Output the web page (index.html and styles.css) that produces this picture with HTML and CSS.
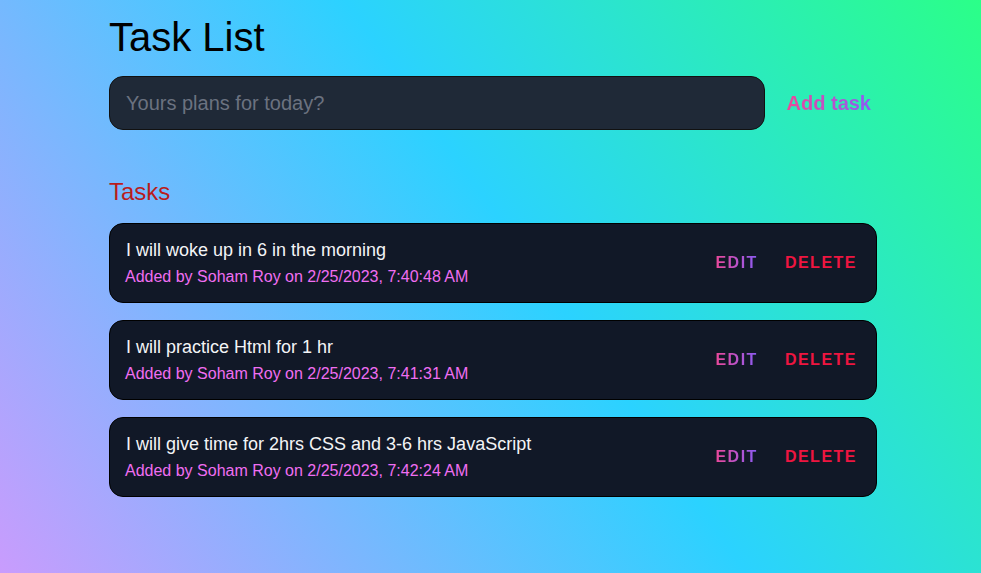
FILE: index.html
```html
<!DOCTYPE html>
<html lang="en">
<head>
	<meta charset="UTF-8">
	<title>Task List</title>
	<link rel="stylesheet" href="styles.css">
</head>
<body>

	<div class="wrapper">
		<h1>Task List</h1>
		<form class="new-task" action="" method="get">
			<input type="text" name="task" id="task" placeholder="Yours plans for today?">
			<button type="button" class="add"><span>Add task</span></button>
		</form>

		<h2>Tasks</h2>
		<div class="tasks">
			<div class="task">
				<div class="content">
					<div class="text">I will woke up in 6 in the morning</div>
					<div class="meta">Added by Soham Roy on 2/25/2023, 7:40:48 AM</div>
				</div>
				<div class="actions">
					<button class="edit"><span>Edit</span></button>
					<button class="delete">Delete</button>
				</div>
			</div>
			<div class="task">
				<div class="content">
					<div class="text">I will practice Html for 1 hr</div>
					<div class="meta">Added by Soham Roy on 2/25/2023, 7:41:31 AM</div>
				</div>
				<div class="actions">
					<button class="edit"><span>Edit</span></button>
					<button class="delete">Delete</button>
				</div>
			</div>
			<div class="task">
				<div class="content">
					<div class="text">I will give time for 2hrs CSS and 3-6 hrs JavaScript</div>
					<div class="meta">Added by Soham Roy on 2/25/2023, 7:42:24 AM</div>
				</div>
				<div class="actions">
					<button class="edit"><span>Edit</span></button>
					<button class="delete">Delete</button>
				</div>
			</div>
		</div>
	</div>

</body>
</html>
```

FILE: styles.css
```css
* {
	box-sizing: border-box;
}
html,
body {
	height: 100%;
}
body {
	margin: 0;
	padding-left: 5px;
	font-family: "Liberation Sans", Arial, sans-serif;
	background-color: #2bd2ff;
	background-image: linear-gradient(55deg, #c99cfd 0%, #2bd2ff 54%, #2bff88 100%);
}
.wrapper {
	margin: 0 auto;
	width: 768px;
}
h1 {
	margin: 14px 0 16px;
	font-size: 40px;
	font-weight: normal;
	line-height: 46px;
	color: #000;
}
.new-task {
	display: flex;
	align-items: center;
	gap: 16px;
}
input {
	flex: 1;
	height: 54px;
	padding: 0 16px;
	border: 1px solid #111;
	border-radius: 14px;
	background-color: #1f2937;
	color: #e5e7eb;
	font-family: inherit;
	font-size: 20px;
	outline: none;
}
input::placeholder {
	color: #6b7280;
}
button {
	padding: 0;
	border: none;
	background: none;
	font-family: inherit;
	cursor: pointer;
}
.add {
	padding: 0 6px;
	font-size: 20px;
	font-weight: bold;
}
.add span,
.edit span {
	background-image: linear-gradient(to right, #ec4899, #8b5cf6);
	-webkit-background-clip: text;
	background-clip: text;
	color: transparent;
}
h2 {
	margin: 48px 0 17px;
	font-size: 24px;
	font-weight: normal;
	line-height: 28px;
	color: #b91c1c;
}
.tasks {
	display: flex;
	flex-direction: column;
	gap: 17px;
}
.task {
	display: flex;
	align-items: center;
	justify-content: space-between;
	padding: 13px 20px 13px 15px;
	border: 1px solid #000;
	border-radius: 14px;
	background-color: #111827;
}
.text {
	padding-left: 1px;
	font-size: 18px;
	line-height: 26px;
	color: #f3f4f6;
}
.meta {
	margin-top: 2px;
	font-size: 16px;
	line-height: 24px;
	color: #f06ef2;
}
.actions {
	display: flex;
	gap: 27px;
}
.edit,
.delete {
	font-size: 16px;
	font-weight: bold;
	letter-spacing: 1.5px;
	text-transform: uppercase;
}
.delete {
	margin-right: -1px;
	color: #ee1540;
}
```
